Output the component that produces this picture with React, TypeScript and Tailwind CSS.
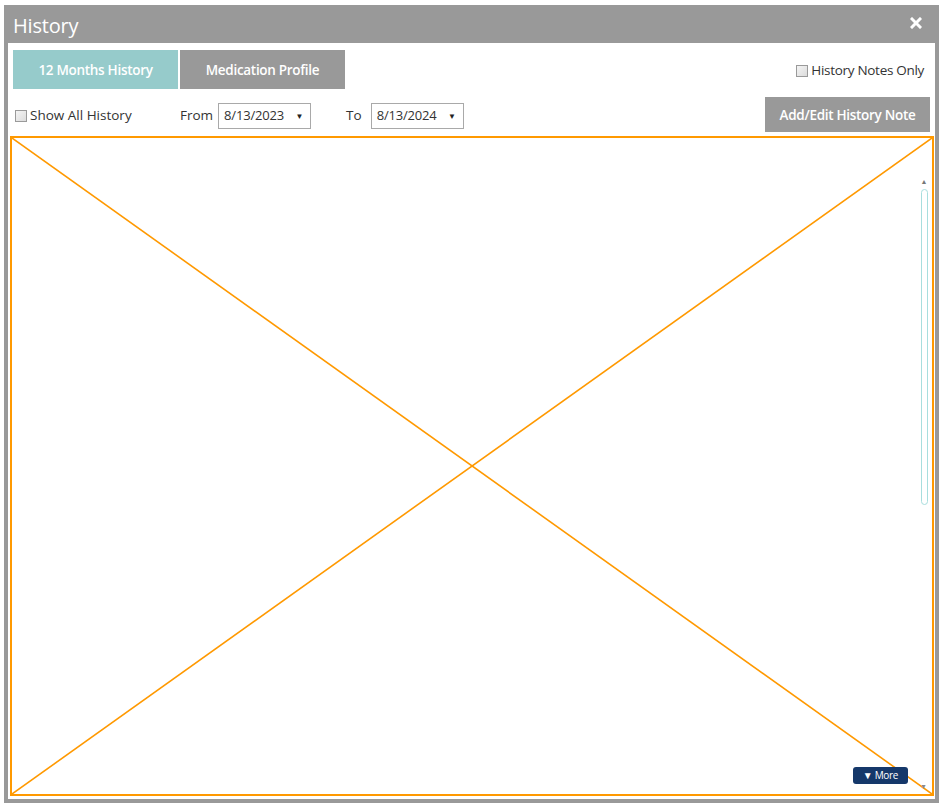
import React from 'react';

function Checkbox() {
  return <span className="inline-block w-[12px] h-[12px] border border-[#9a9a9a] bg-gradient-to-br from-[#f4f4f4] to-[#dcdcdc] shrink-0" />;
}

function DateSelect({ value }: { value: string }) {
  return (
    <div className="flex items-center justify-between w-[93px] h-[26px] border border-[#a9a9a9] bg-white pl-[5px] pr-[7px] text-[13px] text-[#333] tracking-[-0.2px]">
      <span>{value}</span>
      <span className="text-[8px] text-[#222]">▼</span>
    </div>
  );
}

export default function App() {
  return (
    <div className="w-[949px] h-[807px] bg-white pt-[5px] pl-[4px]" style={{ fontFamily: '"Open Sans", "Noto Sans", sans-serif' }}>
      <div className="w-[935px] h-[798px] border-x-[4px] border-b-[4px] border-[#999999] flex flex-col bg-white">
        {/* title bar */}
        <div className="h-[38px] bg-[#999999] flex items-center justify-between -mx-[4px] pl-[9px] pr-[17px] shrink-0">
          <span className="text-white text-[20px] leading-none tracking-[-0.2px] mt-[3px]">History</span>
          <svg width="12" height="12" viewBox="0 0 12 12" className="mb-[3px]">
            <path d="M2 2 L10 10 M10 2 L2 10" stroke="white" strokeWidth="3" strokeLinecap="square" />
          </svg>
        </div>

        <div className="flex-1 flex flex-col min-h-0">
          {/* tabs row */}
          <div className="flex items-center justify-between mt-[7px] pl-[5px] pr-[11px]">
            <div className="flex gap-[2px]">
              <div className="w-[165px] h-[39px] bg-[#96cbcb] flex items-center justify-center text-white font-semibold text-[13.5px] tracking-[-0.3px] pt-[1px]">12 Months History</div>
              <div className="w-[165px] h-[39px] bg-[#999999] flex items-center justify-center text-white font-semibold text-[13.5px] tracking-[-0.3px] pt-[1px]">Medication Profile</div>
            </div>
            <label className="flex items-center gap-[3px] text-[13.5px] text-[#333] tracking-[-0.3px] mt-[2px]">
              <Checkbox />
              <span>History Notes Only</span>
            </label>
          </div>

          {/* filter row */}
          <div className="flex items-center justify-between mt-[8px] h-[35px] pl-[7px] pr-[5px]">
            <div className="flex items-center text-[13.5px] text-[#333] pt-[2px]">
              <label className="flex items-center gap-[3px] w-[165px]">
                <Checkbox />
                <span>Show All History</span>
              </label>
              <span className="mr-[5px]">From</span>
              <DateSelect value="8/13/2023" />
              <span className="ml-[35px] mr-[9px]">To</span>
              <DateSelect value="8/13/2024" />
            </div>
            <div className="w-[165px] h-[35px] bg-[#999999] flex items-center justify-center text-white font-semibold text-[13.5px] tracking-[-0.3px] pt-[1px]">Add/Edit History Note</div>
          </div>

          {/* chart placeholder */}
          <div className="relative mt-[4px] ml-[2px] mr-[1px] h-[660px] border-2 border-[#ff9900]">
            <svg className="absolute inset-0 w-full h-full" viewBox="0 0 920 656" preserveAspectRatio="none">
              <line x1="0" y1="0" x2="920" y2="656" stroke="#ff9900" strokeWidth="1.6" />
              <line x1="920" y1="0" x2="0" y2="656" stroke="#ff9900" strokeWidth="1.6" />
            </svg>
            {/* scrollbar */}
            <div className="absolute right-[3px] top-[40px] w-[10px] flex flex-col items-center">
              <span className="text-[7px] leading-none text-[#777]">▲</span>
              <div className="mt-[4px] w-[7px] h-[316px] rounded-full border border-[#a8dede] bg-white" />
            </div>
            <span className="absolute right-[5px] bottom-[4px] text-[7px] leading-none text-[#888]">▼</span>
            <div className="absolute right-[24px] bottom-[10px] w-[55px] h-[17px] rounded-[3px] bg-[#15386a] flex items-center justify-center text-white text-[10px] tracking-[-0.3px]">
              ▼ More
            </div>
          </div>
        </div>
      </div>
    </div>
  );
}
